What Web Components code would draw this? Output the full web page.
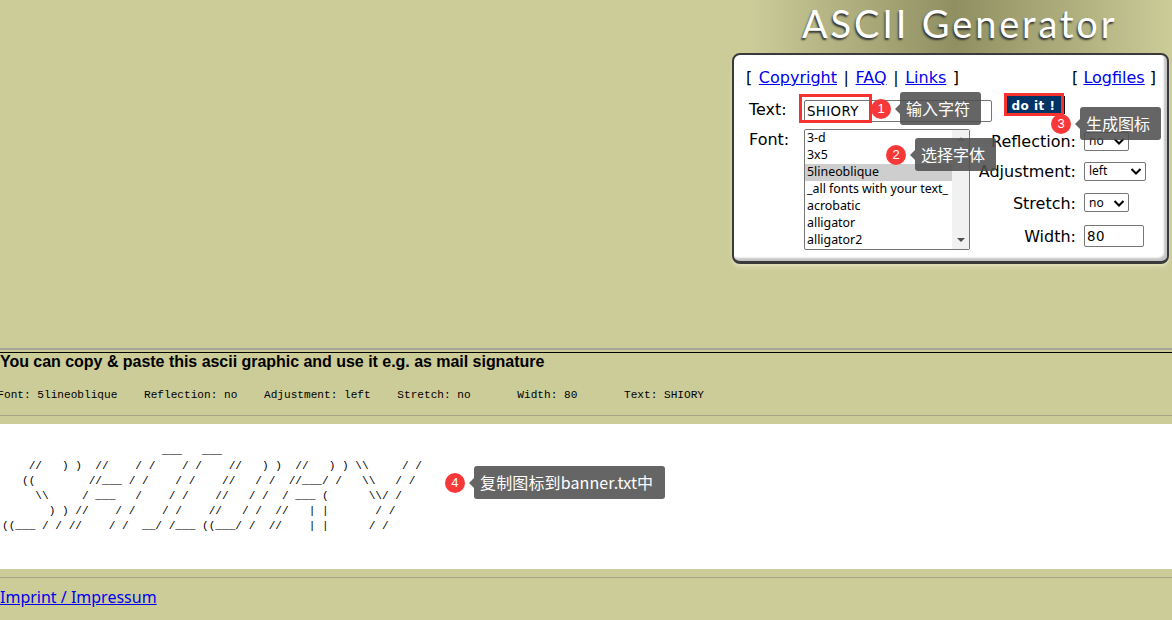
<!DOCTYPE html>
<html><head><meta charset="utf-8">
<style>
html,body{margin:0;padding:0;background:#cccc99;}
body{width:1172px;height:620px;overflow:hidden;font-family:"DejaVu Sans","Liberation Sans",sans-serif;position:relative;}
</style></head><body>
<template id="t-hero"><style>
:host{display:flex;flex-direction:column;align-items:flex-end;height:348px;box-sizing:border-box;background:linear-gradient(90deg,#cccc99 0,#cccc99 750px,#8f8f62 955px,#b4b482 1090px,#cccc99 1172px) top/100% 53px no-repeat;}
h1{margin:0;height:53px;width:440px;box-sizing:border-box;padding:0 0 0 70px;font:400 38px/47px Lato,sans-serif;letter-spacing:2.85px;color:#fff;text-shadow:-1px 2px 2px #333;white-space:nowrap;}
.w{margin-right:3px;}
</style><h1>ASCII Generator</h1><div class="w"><slot></slot></div></template>

<template id="t-panel"><style>
:host{display:block;width:437px;height:211px;box-sizing:border-box;background:#fff;border:2px solid #3a3a3a;border-bottom-width:3px;border-radius:8px;box-shadow:inset -3px -3px 2px #c4c4c4,0 2px 0 #ddddb4,0 4px 4px #d6d6aa;font:16px/22px "DejaVu Sans",sans-serif;color:#000;padding:12px 11px 0 12px;}
nav{display:flex;justify-content:space-between;height:22px;align-items:center;}
nav span.g{white-space:pre;}
nav span.l{word-spacing:1.5px;}
a{color:#00e;text-decoration:underline;}
.r1{display:flex;margin-top:11px;height:29px;}
.r2{display:flex;height:127px;}
.lab{width:58px;padding-left:3px;box-sizing:border-box;flex:none;}
.r1 .lab{margin-top:-1px;}
.inp{width:188px;height:22px;box-sizing:border-box;border:1px solid #767676;border-radius:2px;font:13.33px/22px "DejaVu Sans",sans-serif;letter-spacing:.4px;padding-left:2px;flex:none;}
.btn{margin:-4px 0 0 13px;width:60px;height:18px;box-sizing:border-box;background:#003366;color:#fff;font:bold 12px/20px "DejaVu Sans",sans-serif;text-align:center;letter-spacing:.5px;border-right:3px solid #111;}
.side{margin-left:6px;flex:1;display:grid;grid-template-columns:100px auto;column-gap:8px;grid-template-rows:24px 36px 27px 40px;justify-items:start;align-items:center;}
.side label{justify-self:end;line-height:22px;padding-top:2px;}
</style>
<nav><span class="g l">[ <a>Copyright</a> | <a>FAQ</a> | <a>Links</a> ]</span><span class="g">[ <a>Logfiles</a> ]</span></nav>
<div class="r1"><div class="lab">Text:</div><div class="inp">SHIORY</div><div class="btn">do it !</div></div>
<div class="r2"><div class="lab">Font:</div><font-list></font-list>
<div class="side"><label>Reflection:</label><fake-select w="45">no</fake-select><label>Adjustment:</label><fake-select w="62">left</fake-select><label>Stretch:</label><fake-select w="45">no</fake-select><label>Width:</label><div class="inp" style="width:60px;">80</div></div></div>
</template>

<template id="t-select"><style>
:host{display:inline-flex;align-items:center;justify-content:space-between;box-sizing:border-box;height:19px;border:1px solid #767676;border-radius:2px;background:#fff;font:12px/16px "Noto Sans",sans-serif;padding:0 3px 0 4px;}
svg{display:block}
</style><slot></slot><svg width="12" height="8" viewBox="0 0 12 8"><path d="M1.5 2 6 6.5 10.5 2" fill="none" stroke="#000" stroke-width="2"/></svg></template>

<template id="t-list"><style>
:host{display:flex;width:166px;height:121px;box-sizing:border-box;border:1px solid #767676;border-radius:2px;font:12.4px/15px "Noto Sans",sans-serif;background:#fff;overflow:hidden;flex:none;}
.items{flex:1;}
.items div{padding-left:2px;height:17px;white-space:nowrap;overflow:hidden;}
.items div.s{background:#cecece;}
.bar{width:17px;background:#f1f1f1;display:flex;flex-direction:column;justify-content:space-between;align-items:center;padding:7px 0;box-sizing:border-box;}
i{display:block;width:0;height:0;border-left:4px solid transparent;border-right:4px solid transparent;}
i.u{border-bottom:4px solid #a3a3a3}i.d{border-top:4px solid #505050}
</style><div class="items"><div>3-d</div><div>3x5</div><div class="s">5lineoblique</div><div>_all fonts with your text_</div><div>acrobatic</div><div>alligator</div><div>alligator2</div></div><div class="bar"><i class="u"></i><i class="d"></i></div></template>

<template id="t-result"><style>
:host{display:block;color:#000;}
.h1{height:1px;background:#a6a68e;border-top:1px solid #a6a6a0;}
.h2{height:1px;background:#000;margin-top:2px;}
h2{margin:0;font:bold 16px/18px "Liberation Sans",sans-serif;letter-spacing:-.03px;height:18px;}
.info{margin:16px 0 0 -2.67px;height:16px;font:11.11px/16px "Liberation Mono",monospace;white-space:pre;}
.h3{height:1px;background:#a3a385;margin-top:12px;}
.art{margin:8px 0 0;height:145px;background:#fff;box-sizing:border-box;padding:20px 0 0 2px;font:11.11px/15px "Liberation Mono",monospace;white-space:pre;}
.h4{height:1px;background:#a3a385;margin-top:8px;}
</style><div class="h1"></div><div class="h2"></div><h2>You can copy &amp; paste this ascii graphic and use it e.g. as mail signature</h2>
<div class="info">Font: 5lineoblique    Reflection: no    Adjustment: left    Stretch: no       Width: 80       Text: SHIORY</div>
<div class="h3"></div>
<div class="art"></div>
<div class="h4"></div></template>

<template id="t-foot"><style>
:host{display:block;font:16px/20px "Noto Sans",sans-serif;padding-top:9px;}
a{color:#00e;text-decoration:underline;}
</style><a>Imprint / Impressum</a></template>

<template id="t-tip"><style>
:host{position:absolute;display:flex;align-items:center;height:33px;}
b{width:20px;height:20px;border-radius:50%;background:#f63838;color:#fff;font:13px/20px "Liberation Sans",sans-serif;text-align:center;flex:none;}
i{width:0;height:0;border:5px solid transparent;border-right-color:rgba(80,80,80,.88);border-left:0;margin-left:4px;flex:none;}
span{background:rgba(80,80,80,.88);color:#fff;height:33px;box-sizing:border-box;padding:0 var(--pr,11px) 0 6px;border-radius:3px;font:16px/33px "Noto Sans CJK SC",sans-serif;white-space:nowrap;}
</style><b></b><i></i><span><slot></slot></span></template>

<template id="t-box"><style>:host{position:absolute;display:block;box-sizing:border-box;border:3px solid #f5322d;}</style></template>

<ascii-hero><control-panel></control-panel></ascii-hero>
<ascii-result></ascii-result>
<site-foot></site-foot>
<red-box style="left:799px;top:94px;width:73px;height:29px"></red-box>
<red-box style="left:1004px;top:93px;width:60px;height:23px"></red-box>
<tip-note n="1" style="left:871px;top:92px">输入字符</tip-note>
<tip-note n="2" style="left:886px;top:138px">选择字体</tip-note>
<tip-note n="3" style="left:1051px;top:107px">生成图标</tip-note>
<tip-note n="4" style="left:445px;top:466px;--pr:12px;letter-spacing:.13px">复制图标到banner.txt中</tip-note>
<script>
const B='\\', BB=B+B;
const ROWS=[
 [[24,'___'],[30,'___']],
 [[4,'//'],[9,')'],[11,')'],[14,'//'],[20,'/'],[22,'/'],[27,'/'],[29,'/'],[34,'//'],[39,')'],[41,')'],[44,'//'],[49,')'],[51,')'],[53,BB],[60,'/'],[62,'/']],
 [[3,'(('],[13,'//___'],[19,'/'],[21,'/'],[26,'/'],[28,'/'],[33,'//'],[38,'/'],[40,'/'],[43,'//___/'],[50,'/'],[54,BB],[59,'/'],[61,'/']],
 [[5,BB],[12,'/'],[14,'___'],[20,'/'],[25,'/'],[27,'/'],[32,'//'],[37,'/'],[39,'/'],[42,'/'],[44,'___'],[48,'('],[55,BB+'/'],[59,'/']],
 [[7,')'],[9,')'],[11,'//'],[17,'/'],[19,'/'],[24,'/'],[26,'/'],[31,'//'],[36,'/'],[38,'/'],[41,'//'],[46,'|'],[48,'|'],[56,'/'],[58,'/']],
 [[0,'((___'],[6,'/'],[8,'/'],[10,'//'],[16,'/'],[18,'/'],[21,'__/'],[25,'/___'],[30,'((___/'],[37,'/'],[40,'//'],[46,'|'],[48,'|'],[55,'/'],[57,'/']]
];
function artText(){return ROWS.map(r=>{let s='';for(const [c,t] of r){s=s.padEnd(c,' ')+t;}return s;}).join('\n');}
function def(tag,id,init){customElements.define(tag,class extends HTMLElement{constructor(){super();const s=this.attachShadow({mode:'open'});s.appendChild(document.getElementById(id).content.cloneNode(true));}connectedCallback(){if(init)init(this);}});}
def('ascii-hero','t-hero');def('control-panel','t-panel');def('font-list','t-list');
def('fake-select','t-select',e=>{e.style.width=e.getAttribute('w')+'px'});
def('ascii-result','t-result',e=>{e.shadowRoot.querySelector('.art').textContent=artText()});
def('site-foot','t-foot');def('red-box','t-box');
def('tip-note','t-tip',e=>{e.shadowRoot.querySelector('b').textContent=e.getAttribute('n')});
</script>
</body></html>
